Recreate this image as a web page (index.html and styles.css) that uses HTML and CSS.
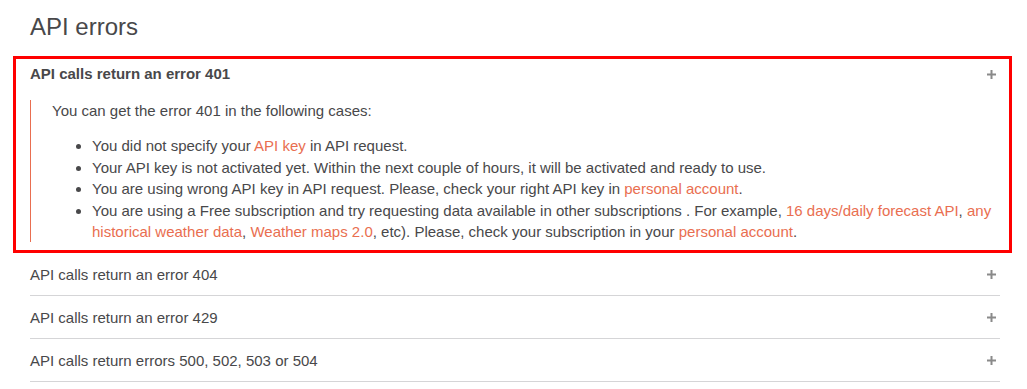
FILE: index.html
```html
<!DOCTYPE html>
<html lang="en">
<head>
  <meta charset="UTF-8" />
  <meta name="viewport" content="width=device-width, initial-scale=1.0" />
  <title>API errors</title>
  <link rel="stylesheet" href="styles.css">
</head>
<body>

  <div class="page">
    <h2 class="title">API errors</h2>

    <div class="faq">
      <div class="item open">
        <div class="item-head">
          <span>API calls return an error 401</span>
          <svg class="plus" width="9" height="9" viewBox="0 0 9 9"><path d="M4.5 0v9M0 4.5h9" stroke="#8a8a8a" stroke-width="2"/></svg>
        </div>
        <div class="item-body">
          <p>You can get the error 401 in the following cases:</p>
          <ul>
            <li>You did not specify your <a href="#">API key</a> in API request.</li>
            <li>Your API key is not activated yet. Within the next couple of hours, it will be activated and ready to use.</li>
            <li>You are using wrong API key in API request. Please, check your right API key in <a href="#">personal account</a>.</li>
            <li>You are using a Free subscription and try requesting data available in other subscriptions . For example, <a href="#">16 days/daily forecast API</a>, <a href="#">any historical weather data</a>, <a href="#">Weather maps 2.0</a>, etc). Please, check your subscription in your <a href="#">personal account</a>.</li>
          </ul>
        </div>
      </div>

      <div class="item">
        <div class="item-head">
          <span>API calls return an error 404</span>
          <svg class="plus" width="9" height="9" viewBox="0 0 9 9"><path d="M4.5 0v9M0 4.5h9" stroke="#8a8a8a" stroke-width="2"/></svg>
        </div>
      </div>

      <div class="item">
        <div class="item-head">
          <span>API calls return an error 429</span>
          <svg class="plus" width="9" height="9" viewBox="0 0 9 9"><path d="M4.5 0v9M0 4.5h9" stroke="#8a8a8a" stroke-width="2"/></svg>
        </div>
      </div>

      <div class="item">
        <div class="item-head">
          <span>API calls return errors 500, 502, 503 or 504</span>
          <svg class="plus" width="9" height="9" viewBox="0 0 9 9"><path d="M4.5 0v9M0 4.5h9" stroke="#8a8a8a" stroke-width="2"/></svg>
        </div>
      </div>
    </div>
  </div>

</body>
</html>
```

FILE: styles.css
```css
* {
  box-sizing: border-box;
  margin: 0;
  padding: 0;
  font-family: 'Liberation Sans', Arial, sans-serif;
}

body {
  background: #fff;
  color: #48484a;
  font-size: 15px;
  line-height: 1.42857;
}

a {
  color: #e96e50;
  text-decoration: none;
}

.page {
  width: 1012px;
  padding-left: 13px;
}

.title {
  font-size: 24px;
  font-weight: normal;
  line-height: 1.1;
  margin: 14px 0 16px 17px;
}

.item {
  margin-left: 17px;
  width: 970px;
  border-bottom: 1px solid #d5d5d7;
}

.item .item-head {
  display: flex;
  justify-content: space-between;
  align-items: center;
  height: 42px;
}

.plus {
  margin-right: 4px;
}

.item.open {
  margin-left: 0;
  width: 999px;
  border: 3px solid #ff0000;
  padding: 0 9px 8px 14px;
}

.item.open .item-head {
  font-weight: bold;
  height: auto;
  padding: 4px 0 15px;
}

.item-body {
  border-left: 1px solid #e96e50;
  padding-left: 21px;
}

.item-body p {
  margin-bottom: 14px;
}

.item-body ul {
  padding-left: 40px;
}
```
